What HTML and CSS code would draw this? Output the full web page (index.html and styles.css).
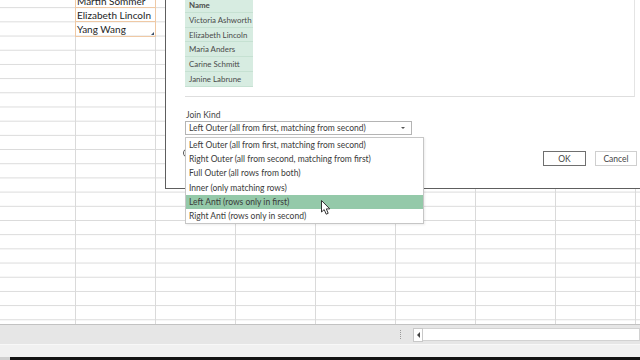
FILE: index.html
```html
<!DOCTYPE html>
<html lang="en">
  <head>
    <meta charset="UTF-8" />
    <title>Merge - Join Kind</title>
    <link rel="stylesheet" href="styles.css">
  </head>
  <body>
    <!-- ---- WORKSHEET ---- -->
    <div class="sheet">
      <div class="names">
        <div class="cell">Martin Sommer</div>
        <div class="cell">Elizabeth Lincoln</div>
        <div class="cell last">Yang Wang<span class="resize-corner"></span></div>
      </div>
    </div>

    <div class="hbar">
      <span class="grip"></span>
      <span class="scroll-left"><span class="arrow-left"></span></span>
      <span class="track"></span>
    </div>
    <div class="status"></div>
    <div class="taskbar"></div>

    <!-- ---- MERGE DIALOG ---- -->
    <div class="dialog">
      <div class="preview">
        <div class="col">
          <div class="head">Name</div>
          <div>Victoria Ashworth</div>
          <div>Elizabeth Lincoln</div>
          <div>Maria Anders</div>
          <div>Carine Schmitt</div>
          <div>Janine Labrune</div>
        </div>
      </div>

      <p class="label">Join Kind</p>
      <div class="combo">
        <span>Left Outer (all from first, matching from second)</span>
        <span class="caret"></span>
      </div>

      <div class="buttons">
        <span class="info"></span>
        <button class="btn default">OK</button>
        <button class="btn">Cancel</button>
      </div>

      <ul class="join-list">
        <li>Left Outer (all from first, matching from second)</li>
        <li>Right Outer (all from second, matching from first)</li>
        <li>Full Outer (all rows from both)</li>
        <li>Inner (only matching rows)</li>
        <li class="active">Left Anti (rows only in first)</li>
        <li>Right Anti (rows only in second)</li>
      </ul>
    </div>

    <svg class="cursor" width="11" height="16" viewBox="0 0 11 16">
      <path d="M0.5 0.5 L0.5 12 L3.2 9.6 L5.2 14.2 L7.2 13.3 L5.3 8.9 L8.8 8.9 Z" fill="#fff" stroke="#333" stroke-width="1" stroke-linejoin="round" />
    </svg>
  </body>
</html>
```

FILE: styles.css
```css
/* ---- RESET/BASIC STYLING ---- */
* {
  padding: 0;
  margin: 0;
  box-sizing: border-box;
}

body {
  width: 640px;
  height: 360px;
  overflow: hidden;
  position: relative;
  background: #fff;
  font-family: Lato, "Liberation Sans", sans-serif;
  color: #3a3a3a;
}

/* ---- WORKSHEET ---- */
.sheet {
  height: 324px;
  overflow: hidden;
  background-color: #fff;
  background-image:
    linear-gradient(90deg, #dadada 1px, transparent 1px),
    linear-gradient(#dadada 1px, transparent 1px);
  background-size: 80px 100%, 100% 14.2px;
  background-position: 75px 0, 0 7.2px;
}

.names {
  margin: -6px 0 0 75px;
  width: 81px;
  border-left: 1px solid #efc9a5;
  border-right: 1px solid #efc9a5;
}

.cell {
  position: relative;
  height: 14.2px;
  border-bottom: 1px solid #efc9a5;
  padding-left: 1px;
  font-size: 10px;
  line-height: 14px;
  color: #1e1e1e;
  white-space: nowrap;
}

.resize-corner {
  position: absolute;
  right: 1px;
  bottom: 1px;
  width: 0;
  height: 0;
  border-left: 3px solid transparent;
  border-bottom: 3px solid #3a4f6a;
}

/* ---- SCROLL / STATUS BAR ---- */
.hbar {
  height: 20px;
  display: flex;
  align-items: center;
  padding-left: 400px;
  border-top: 1px solid #c2c2c2;
  background: #e6e6e6;
}

.grip {
  width: 1px;
  height: 9px;
  border-left: 1px dotted #9a9a9a;
}

.scroll-left {
  display: flex;
  align-items: center;
  justify-content: center;
  width: 10px;
  height: 14px;
  margin-left: 12px;
  background: #fff;
  border: 1px solid #c8c8c8;
}

.arrow-left {
  width: 0;
  height: 0;
  border-top: 3px solid transparent;
  border-bottom: 3px solid transparent;
  border-right: 3px solid #444;
}

.track {
  flex: 1;
  height: 13px;
  background: #fff;
  border: 1px solid #d2d2d2;
  border-left: none;
}

.status {
  height: 13px;
  background: #f1f1f1;
  border-top: 1px solid #f8f8f8;
}

.taskbar {
  height: 3px;
  background: #141414;
  border-left: 10px solid #cfcfcf;
}

/* ---- MERGE DIALOG ---- */
.dialog {
  position: absolute;
  left: 165px;
  top: -1px;
  width: 490px;
  height: 190px;
  padding-left: 19px;
  border: 1px solid #5e5e5e;
  background: #fff;
  font-size: 8.5px;
}

.preview {
  width: 450px;
  height: 99px;
  border-right: 1px solid #e4e4e4;
  border-bottom: 1px solid #dedede;
}

.col {
  width: 68px;
  margin-top: -2px;
  background: #d7ece1;
  font-size: 7.9px;
}

.col div {
  height: 14.8px;
  padding-left: 4px;
  line-height: 14px;
  border-bottom: 1px solid #c6e1d2;
  color: #4a4a4a;
  white-space: nowrap;
}

.col .head {
  font-weight: bold;
}

.label {
  margin-top: 12px;
  line-height: 12px;
  padding-left: 1px;
  color: #444;
}

.combo {
  display: flex;
  align-items: center;
  justify-content: space-between;
  width: 227px;
  height: 14px;
  padding: 0 6px 0 3px;
  border: 1px solid #b4b4b4;
}

.caret {
  width: 0;
  height: 0;
  border-left: 2px solid transparent;
  border-right: 2px solid transparent;
  border-top: 2px solid #555;
}

.buttons {
  display: flex;
  align-items: center;
  gap: 9px;
  width: 452px;
  margin-top: 16px;
}

.info {
  align-self: flex-start;
  width: 10px;
  height: 10px;
  margin: -3px auto 0 -2px;
  border: 1px solid #555;
  border-radius: 50%;
}

.btn {
  width: 42px;
  height: 15px;
  border: 1px solid #cfcfcf;
  background: #fff;
  font-family: inherit;
  font-size: 8.5px;
  color: #444;
}

.btn.default {
  width: 43px;
  border-color: #6f6f6f;
}

.join-list {
  position: absolute;
  left: 19px;
  top: 137px;
  width: 239px;
  list-style: none;
  background: #fff;
  border: 1px solid #c6c6c6;
  box-shadow: 1px 1px 2px rgba(0, 0, 0, 0.08);
}

.join-list li {
  height: 14.2px;
  line-height: 14.2px;
  padding-left: 3px;
  color: #3a3a3a;
  white-space: nowrap;
}

.join-list li.active {
  background: #94c9a9;
}

/* ---- POINTER ---- */
.cursor {
  position: absolute;
  left: 321px;
  top: 200px;
}
```
